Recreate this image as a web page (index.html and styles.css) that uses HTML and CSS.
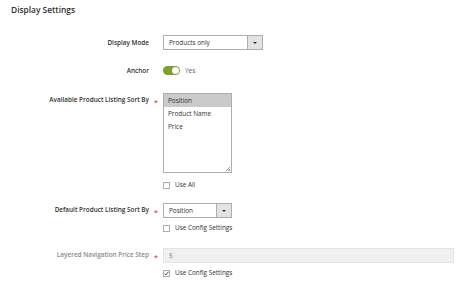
FILE: index.html
```html
<!DOCTYPE html>
<html lang="en">
<head>
    <meta charset="UTF-8">
    <title>Display Settings</title>
    <link rel="stylesheet" href="styles.css">
</head>
<body>
    <div class="section">
        <h2 class="section-title">Display Settings</h2>

        <div class="field field-mode">
            <div class="label">Display Mode</div>
            <div class="req"></div>
            <div class="control">
                <div class="select select-wide">
                    <span class="select-value">Products only</span>
                    <span class="select-arrow"><i></i></span>
                </div>
            </div>
        </div>

        <div class="field field-anchor">
            <div class="label">Anchor</div>
            <div class="req"></div>
            <div class="control">
                <span class="toggle"><i></i></span>
                <span class="toggle-text">Yes</span>
            </div>
        </div>

        <div class="field field-top field-available">
            <div class="label">Available Product Listing Sort By</div>
            <div class="req">*</div>
            <div class="control">
                <div class="multiselect">
                    <div class="option selected">Position</div>
                    <div class="option">Product Name</div>
                    <div class="option">Price</div>
                    <span class="resize"></span>
                </div>
                <label class="check check-useall"><span class="box"></span>Use All</label>
            </div>
        </div>

        <div class="field field-top field-default">
            <div class="label">Default Product Listing Sort By</div>
            <div class="req">*</div>
            <div class="control">
                <div class="select select-narrow">
                    <span class="select-value">Position</span>
                    <span class="select-arrow"><i></i></span>
                </div>
                <label class="check"><span class="box"></span>Use Config Settings</label>
            </div>
        </div>

        <div class="field field-top field-price disabled">
            <div class="label">Layered Navigation Price Step</div>
            <div class="req">*</div>
            <div class="control control-grow">
                <div class="text-input">$</div>
                <label class="check"><span class="box">
                    <svg width="5" height="5" viewBox="0 0 5 5"><path d="M0.6 2.6 L1.9 3.9 L4.4 0.8" fill="none" stroke="#303030" stroke-width="0.9"/></svg>
                </span>Use Config Settings</label>
            </div>
        </div>
    </div>
</body>
</html>
```

FILE: styles.css
```css
body {
    margin: 0;
    background: #ffffff;
    font-family: "Open Sans", "Liberation Sans", sans-serif;
    color: #303030;
}
.section {
    padding: 4px 20px 0 0;
}
.section-title {
    margin: 0 0 0 11px;
    font-size: 8.4px;
    font-weight: 600;
    line-height: 12px;
    color: #303030;
}
.field {
    display: flex;
    align-items: center;
}
.field-top {
    align-items: flex-start;
}
.field-mode {
    margin-top: 19px;
}
.field-anchor {
    margin-top: 13px;
}
.field-available {
    margin-top: 15px;
}
.field-default {
    margin-top: 14px;
}
.field-price {
    margin-top: 16px;
}
.label {
    width: 149px;
    flex-shrink: 0;
    text-align: right;
    font-size: 6.4px;
    font-weight: 600;
    line-height: 15px;
    color: #303030;
}
.field-top .label {
    line-height: 14px;
}
.req {
    width: 14px;
    flex-shrink: 0;
    text-align: center;
    color: #e22626;
    font-size: 8px;
    line-height: 18px;
}
.control {
    display: flex;
    flex-direction: column;
    align-items: flex-start;
}
.field-anchor .control {
    flex-direction: row;
    align-items: center;
}
.control-grow {
    flex: 1;
}
.select {
    display: flex;
    height: 15px;
    box-sizing: border-box;
    border: 1px solid #adadad;
    background: #fff;
    font-size: 6.4px;
}
.select-wide {
    width: 100px;
}
.select-narrow {
    width: 69px;
}
.select-value {
    flex: 1;
    padding-left: 5px;
    line-height: 13px;
}
.select-arrow {
    width: 14px;
    background: #e3e3e3;
    border-left: 1px solid #adadad;
    display: flex;
    align-items: center;
    justify-content: center;
}
.select-arrow i {
    width: 0;
    height: 0;
    border-left: 2px solid transparent;
    border-right: 2px solid transparent;
    border-top: 2px solid #303030;
}
.toggle {
    position: relative;
    width: 17px;
    height: 9px;
    border-radius: 5px;
    background: #79a22e;
}
.toggle i {
    position: absolute;
    right: 1px;
    top: 1px;
    width: 7px;
    height: 7px;
    border-radius: 50%;
    background: #fff;
}
.toggle-text {
    margin-left: 5px;
    font-size: 6.4px;
    color: #555;
}
.multiselect {
    position: relative;
    width: 69px;
    height: 80px;
    box-sizing: border-box;
    border: 1px solid #adadad;
    background: #fff;
}
.option {
    padding-left: 4px;
    font-size: 6.4px;
    line-height: 13px;
    color: #303030;
}
.option.selected {
    background: #cacaca;
}
.resize {
    position: absolute;
    right: 1px;
    bottom: 1px;
    width: 4px;
    height: 4px;
    background: linear-gradient(135deg, transparent 45%, #999 45%, #999 55%, transparent 55%, transparent 75%, #999 75%);
}
.check {
    display: flex;
    align-items: center;
    margin-top: 6px;
    font-size: 6.4px;
    line-height: 8px;
    color: #303030;
}
.check-useall {
    margin-top: 8px;
}
.box {
    width: 7px;
    height: 7px;
    box-sizing: border-box;
    border: 1px solid #adadad;
    background: #fff;
    margin-right: 5px;
    display: flex;
    align-items: center;
    justify-content: center;
}
.box svg {
    display: block;
}
.text-input {
    width: 291px;
    height: 15px;
    box-sizing: border-box;
    border: 1px solid #e4e4e4;
    background: #f0f0f0;
    padding-left: 5px;
    font-size: 6.4px;
    line-height: 13px;
    color: #8a8a8a;
}
.disabled .label {
    color: #8a8a8a;
}
```
